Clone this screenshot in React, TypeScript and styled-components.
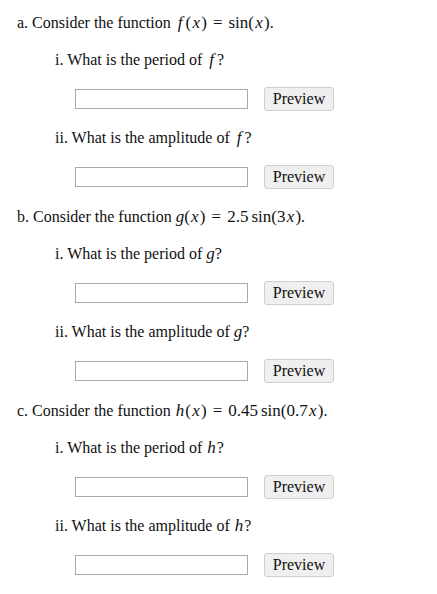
import styled, { createGlobalStyle } from "styled-components";

const GlobalStyle = createGlobalStyle`
  html, body {
    margin: 0;
    padding: 0;
    background: #ffffff;
  }
  body {
    font-family: "Liberation Serif", "Times New Roman", serif;
    font-size: 16px;
    color: #111;
  }
`;

const Page = styled.div`
  padding: 13px 0 0 17px;
  display: flex;
  flex-direction: column;
`;

const Part = styled.section`
  display: flex;
  flex-direction: column;
`;

const Header = styled.div`
  height: 20px;
  line-height: 20px;
  margin-bottom: 17px;
  white-space: nowrap;
`;

const Question = styled.div`
  height: 20px;
  line-height: 20px;
  margin-left: 38px;
  margin-bottom: 17px;
  white-space: nowrap;
`;

const AnswerRow = styled.div<{ $last?: boolean }>`
  height: 24px;
  margin-left: 58px;
  margin-bottom: ${(p) => (p.$last ? 18 : 17)}px;
  display: flex;
  align-items: center;
  gap: 16px;
`;

const Field = styled.input`
  box-sizing: border-box;
  width: 173px;
  height: 20px;
  margin: 0;
  border: 1px solid #a9a9a9;
  background: #fff;
  font-family: inherit;
  font-size: 14px;
  padding: 0 3px;
`;

const PreviewButton = styled.button`
  box-sizing: border-box;
  width: 70px;
  height: 24px;
  margin: 0;
  padding: 0;
  border: 1px solid #cfcfcf;
  border-radius: 3px;
  background: #efefef;
  font-family: "Liberation Serif", "Times New Roman", serif;
  font-size: 16px;
  color: #111;
  line-height: 22px;
`;

const Math = styled.span`
  font-family: "Liberation Serif", "Times New Roman", serif;
  font-size: 17px;
  white-space: nowrap;
`;

// italic math variable; $pad widens it toward the math font's glyph width
const V = styled.i<{ $pad?: number }>`
  font-style: italic;
  padding: 0 ${(p) => p.$pad ?? 1.25}px;
`;

const Eq = styled.span`
  padding: 0 6px;
`;

const Thin = styled.span`
  padding-left: 3px;
`;

type PartData = {
  label: string;
  name: string;
  pad: number;
  rhs: React.ReactNode;
};

const parts: PartData[] = [
  {
    label: "a.",
    name: "f",
    pad: 3,
    rhs: (
      <>
        sin(<V>x</V>)
      </>
    ),
  },
  {
    label: "b.",
    name: "g",
    pad: 0,
    rhs: (
      <>
        2.5<Thin />sin(3<V>x</V>)
      </>
    ),
  },
  {
    label: "c.",
    name: "h",
    pad: 1,
    rhs: (
      <>
        0.45<Thin />sin(0.7<V>x</V>)
      </>
    ),
  },
];

function Answer({ last }: { last?: boolean }) {
  return (
    <AnswerRow $last={last}>
      <Field type="text" />
      <PreviewButton type="button">Preview</PreviewButton>
    </AnswerRow>
  );
}

export default function App() {
  return (
    <>
      <GlobalStyle />
      <Page>
        {parts.map((p) => (
          <Part key={p.label}>
            <Header>
              {p.label} Consider the function{" "}
              <Math>
                <V $pad={p.pad}>{p.name}</V>(<V>x</V>)<Eq>=</Eq>
                {p.rhs}
              </Math>
              .
            </Header>
            <Question>
              i. What is the period of{" "}
              <Math>
                <V $pad={p.pad}>{p.name}</V>
              </Math>
              ?
            </Question>
            <Answer />
            <Question>
              ii. What is the amplitude of{" "}
              <Math>
                <V $pad={p.pad}>{p.name}</V>
              </Math>
              ?
            </Question>
            <Answer last />
          </Part>
        ))}
      </Page>
    </>
  );
}
